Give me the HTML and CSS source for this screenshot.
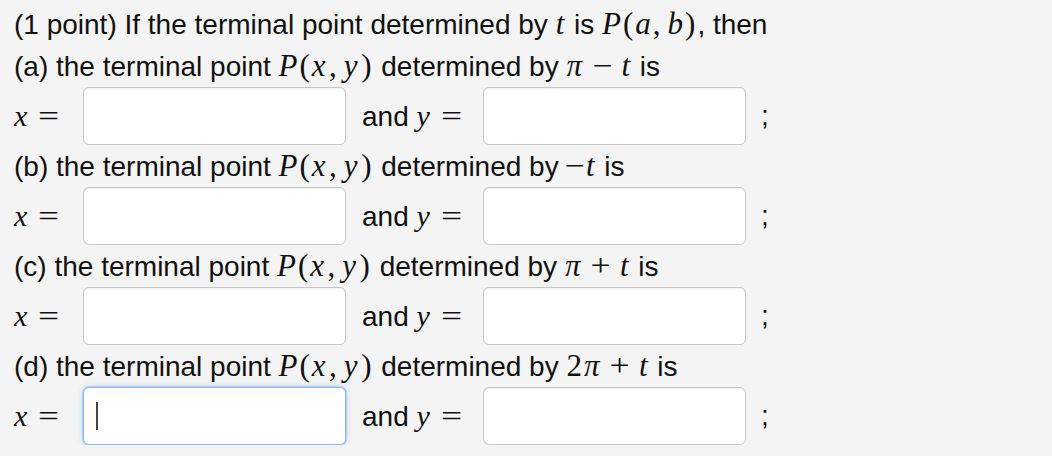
FILE: index.html
```html
<!DOCTYPE html>
<html>
<head>
<meta charset="utf-8">
<link rel="stylesheet" href="styles.css">
</head>
<body>
<div class="problem">
  <p class="line">(1 point) If the terminal point determined by <span class="m"><i>t</i></span> is <span class="m"><i>P</i>(<i>a</i>,<span class="th"></span><i>b</i>)</span>, then</p>

  <p class="line">(a) the terminal point <span class="m"><i>P</i>(<i class="w">x</i>,<span class="th"></span><i class="w">y</i>)</span> determined by <span class="m"><i>π</i><span class="op">−</span><i>t</i></span> is</p>
  <div class="row">
    <span class="m lab"><i>x</i><span class="rel">=</span></span>
    <input class="box" type="text">
    <span class="and">and <span class="m"><i>y</i><span class="rel">=</span></span></span>
    <input class="box" type="text">
    <span class="semi">;</span>
  </div>

  <p class="line">(b) the terminal point <span class="m"><i>P</i>(<i class="w">x</i>,<span class="th"></span><i class="w">y</i>)</span> determined by <span class="m"><span class="neg">−</span><i>t</i></span> is</p>
  <div class="row">
    <span class="m lab"><i>x</i><span class="rel">=</span></span>
    <input class="box" type="text">
    <span class="and">and <span class="m"><i>y</i><span class="rel">=</span></span></span>
    <input class="box" type="text">
    <span class="semi">;</span>
  </div>

  <p class="line">(c) the terminal point <span class="m"><i>P</i>(<i class="w">x</i>,<span class="th"></span><i class="w">y</i>)</span> determined by <span class="m"><i>π</i><span class="op">+</span><i>t</i></span> is</p>
  <div class="row">
    <span class="m lab"><i>x</i><span class="rel">=</span></span>
    <input class="box" type="text">
    <span class="and">and <span class="m"><i>y</i><span class="rel">=</span></span></span>
    <input class="box" type="text">
    <span class="semi">;</span>
  </div>

  <p class="line">(d) the terminal point <span class="m"><i>P</i>(<i class="w">x</i>,<span class="th"></span><i class="w">y</i>)</span> determined by <span class="m">2<i>π</i><span class="op">+</span><i>t</i></span> is</p>
  <div class="row">
    <span class="m lab"><i>x</i><span class="rel">=</span></span>
    <div class="box focus"><span class="caret"></span></div>
    <span class="and">and <span class="m"><i>y</i><span class="rel">=</span></span></span>
    <input class="box" type="text">
    <span class="semi">;</span>
  </div>
</div>
</body>
</html>
```
FILE: styles.css
```css
html, body {
  margin: 0;
  padding: 0;
  background: #f4f4f4;
}
body {
  font-family: "Liberation Sans", Arial, sans-serif;
  font-size: 28px;
  color: #111;
}
.problem {
  padding: 3px 0 0 14px;
}
.line {
  margin: 0;
  height: 42px;
  line-height: 42px;
  white-space: nowrap;
}
.m {
  font-family: "Liberation Serif", "Times New Roman", serif;
  font-size: 31px;
  letter-spacing: 2px;
}
.m i {
  font-style: italic;
}
.m i.w {
  padding-right: 1.5px;
}
.th {
  display: inline-block;
  width: 5px;
}
.op {
  display: inline-block;
  margin: 0 8px 0 10px;
  transform: scaleX(1.15);
}
.neg {
  display: inline-block;
  transform: scaleX(1.15);
}
.rel {
  display: inline-block;
  margin-left: 13px;
  transform: scaleX(1.25);
}
.row {
  display: flex;
  align-items: center;
  height: 58px;
}
.lab {
  width: 69px;
  white-space: nowrap;
  font-size: 30px;
  letter-spacing: 0;
}
.and .m {
  font-size: 30px;
  letter-spacing: 0;
}
.box {
  box-sizing: border-box;
  width: 263px;
  height: 58px;
  margin: 0;
  padding: 0 12px;
  border: 1px solid #c6c6c6;
  border-radius: 6px;
  background: #fff;
  font: inherit;
  outline: none;
  box-shadow: inset 0 1px 2px rgba(0,0,0,0.06);
  display: flex;
  align-items: center;
}
.box.focus {
  border: 1px solid #8ab8ee;
  box-shadow: 0 0 0 1px rgba(138,184,238,0.45), 0 0 6px rgba(100,150,220,0.35);
}
.caret {
  display: block;
  width: 2px;
  height: 28px;
  background: #444;
}
.and {
  margin-left: 16px;
  width: 121px;
  white-space: nowrap;
}
.semi {
  margin-left: 15px;
}
```
